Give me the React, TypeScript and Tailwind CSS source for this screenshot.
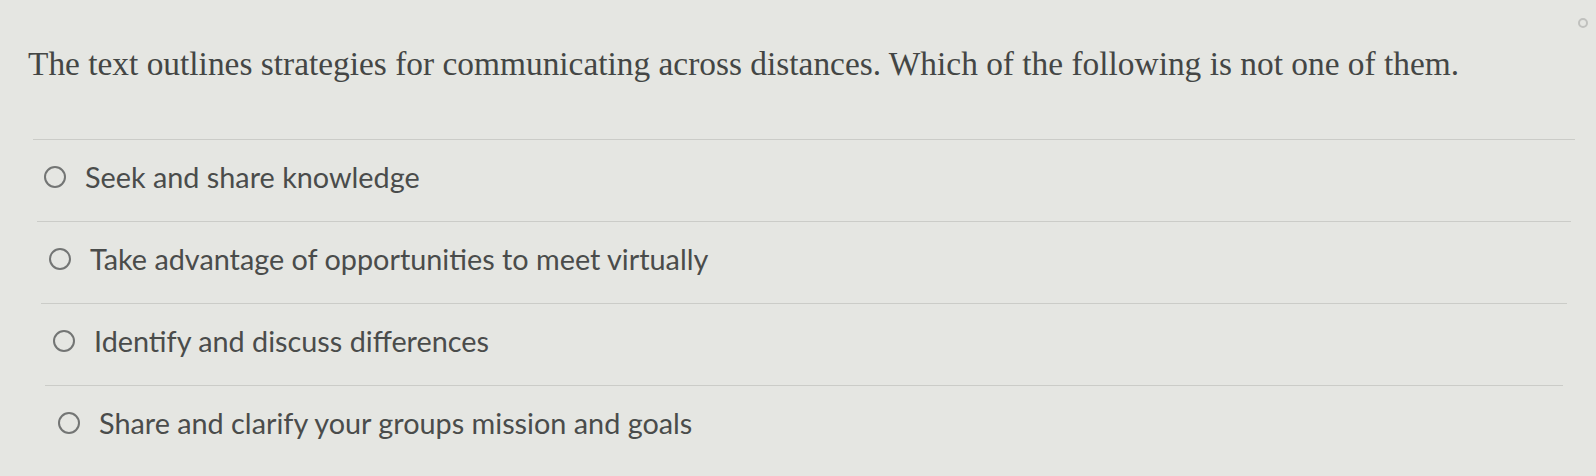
import React from "react";

const options = [
  { label: "Seek and share knowledge", row: "ml-[33px] mr-[21px]", pad: "pl-[11px]" },
  { label: "Take advantage of opportunities to meet virtually", row: "ml-[37px] mr-[25px]", pad: "pl-[12px]" },
  { label: "Identify and discuss differences", row: "ml-[41px] mr-[29px]", pad: "pl-[12px]" },
  { label: "Share and clarify your groups mission and goals", row: "ml-[45px] mr-[33px]", pad: "pl-[13px]" },
];

const Radio = () => (
  <span className="box-border block h-[22px] w-[22px] min-w-[22px] shrink-0 rounded-full border-[2.5px] border-[#737574]" />
);

export default function App() {
  return (
    <div className="h-[476px] w-[1596px] overflow-hidden bg-[#e5e6e2]">
      <div className="flex items-start justify-between pl-[28px] pr-[8px] pt-[44px]">
        <p
          className="text-[33.4px] leading-[40px] text-[#444645]"
          style={{ fontFamily: '"Liberation Serif", serif' }}
        >
          The text outlines strategies for communicating across distances. Which of the following is not one of them.
        </p>
        <span className="-mt-[26px] inline-block h-[10px] w-[10px] rounded-full border-2 border-[#c0c1be]" />
      </div>

      <div className="mt-[55px] flex flex-col" style={{ fontFamily: "Lato, sans-serif" }}>
        {options.map((o) => (
          <div key={o.label} className={`${o.row} h-[82px] border-t border-[#cbccc8]`}>
            <label className={`${o.pad} flex h-[74px] items-center gap-[19px]`}>
              <Radio />
              <span className="text-[28.8px] leading-[34px] text-[#4a4c4b]">{o.label}</span>
            </label>
          </div>
        ))}
      </div>
    </div>
  );
}
